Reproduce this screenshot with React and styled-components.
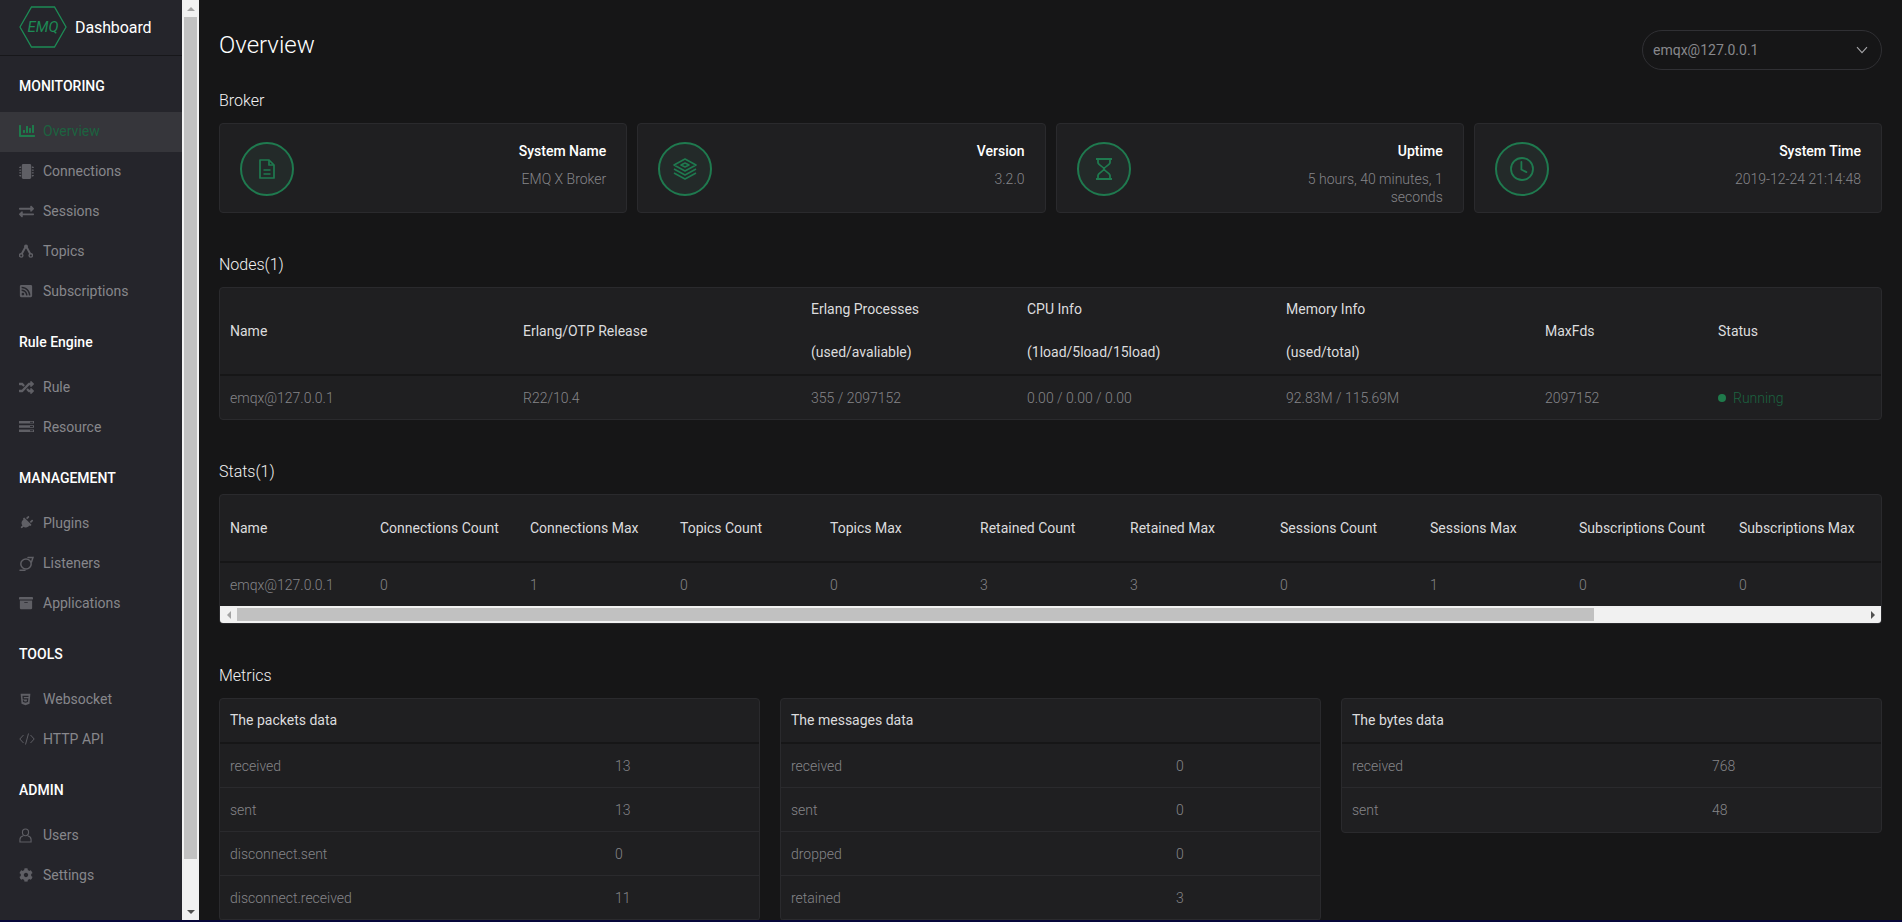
import React from "react";
import styled, { createGlobalStyle } from "styled-components";
import {
  FaChartBar, FaMicrochip, FaExchangeAlt, FaRssSquare, FaRandom, FaPlug, FaArchive, FaHtml5, FaCog,
} from "react-icons/fa";

const Global = createGlobalStyle`
  html, body { margin: 0; padding: 0; height: 100%; overflow: hidden; background: #07073a; }
  body { font-family: Roboto, "Liberation Sans", sans-serif; font-size: 14px; }
  * { box-sizing: border-box; }
`;

const Page = styled.div`
  display: flex;
  height: 920px;
  overflow: hidden;
  background: #161617;
`;

const Aside = styled.aside`
  width: 182px;
  flex: none;
  background: #25252b;
`;

const LogoBar = styled.div`
  display: flex;
  align-items: center;
  gap: 8px;
  height: 56px;
  padding-left: 19px;
  border-bottom: 1px solid #17171a;
`;

const LogoMark = styled.div`
  position: relative;
  width: 48px;
  height: 42px;
  margin-top: -1px;
`;

const LogoText = styled.span`
  position: absolute;
  inset: 0;
  display: flex;
  align-items: center;
  justify-content: center;
  color: #1d8a55;
  font-style: italic;
  font-size: 15px;
`;

const LogoTitle = styled.span`
  color: #fff;
  font-size: 16px;
  font-weight: 400;
  letter-spacing: -0.1px;
`;

const GroupTitle = styled.div`
  height: 56px;
  padding: 20px 0 0 19px;
  line-height: 20px;
  color: #fff;
  font-size: 14px;
  font-weight: 500;
`;

const NavItem = styled.div`
  display: flex;
  align-items: center;
  height: 40px;
  padding: 0 0 2px 19px;
  color: ${(p) => (p.$active ? "#1c6340" : "#87878b")};
  background: ${(p) => (p.$active ? "#36363b" : "transparent")};
  font-size: 14px;
  font-weight: 400;
`;

const NavIcon = styled.span`
  display: flex;
  align-items: center;
  width: 24px;
  height: 16px;
  flex: none;
  color: ${(p) => (p.$active ? "#1e7a4b" : "#5f5f65")};
`;

const PlugTilt = styled.span`
  display: flex;
  transform: rotate(45deg);
`;

const VBar = styled.div`
  display: flex;
  flex-direction: column;
  width: 17px;
  flex: none;
  background: #f1f1f1;
`;

const VArrow = styled.div`
  display: flex;
  align-items: center;
  justify-content: center;
  height: 17px;
  flex: none;
`;

const Tri = styled.i`
  width: 0;
  height: 0;
  display: block;
  border-style: solid;
  border-color: transparent;
  ${(p) => p.$dir === "up" && "border-width: 0 4px 4px; border-bottom-color: #a3a3a3;"}
  ${(p) => p.$dir === "down" && "border-width: 4px 4px 0; border-top-color: #505050;"}
  ${(p) => p.$dir === "left" && "border-width: 4px 4px 4px 0; border-right-color: #a3a3a3;"}
  ${(p) => p.$dir === "right" && "border-width: 4px 0 4px 4px; border-left-color: #505050;"}
`;

const VTrack = styled.div`
  flex: 1;
  padding: 0 2px;
`;

const VThumb = styled.div`
  height: 842px;
  background: #c1c1c1;
`;

const Main = styled.main`
  flex: 1;
  min-width: 0;
  padding: 30px 20px 0;
  overflow: hidden;
`;

const TopRow = styled.div`
  display: flex;
  justify-content: space-between;
  align-items: center;
  height: 40px;
  margin-bottom: 20px;
`;

const PageTitle = styled.h1`
  margin: -10px 0 0;
  color: #fff;
  font-size: 24px;
  font-weight: 300;
  line-height: 30px;
`;

const NodeSelect = styled.div`
  display: flex;
  align-items: center;
  justify-content: space-between;
  width: 240px;
  height: 40px;
  padding: 0 13px 0 10px;
  border: 1px solid #303034;
  border-radius: 20px;
  color: #88888c;
  font-size: 14px;
  font-weight: 400;
`;

const SectionTitle = styled.h2`
  margin: ${(p) => (p.$first ? "1px 0 11px" : "41px 0 11px")};
  height: 22px;
  line-height: 22px;
  color: #f2f2f2;
  font-size: 16px;
  font-weight: 300;
`;

const CardRow = styled.div`
  display: grid;
  grid-template-columns: repeat(4, 1fr);
  gap: 10px;
`;

const InfoCard = styled.div`
  display: flex;
  justify-content: space-between;
  height: 90px;
  padding: 18px 20px;
  background: #1f1f21;
  border: 1px solid #2a2a2d;
  border-radius: 4px;
`;

const IconCircle = styled.div`
  display: flex;
  align-items: center;
  justify-content: center;
  width: 54px;
  height: 54px;
  flex: none;
  border: 2px solid #1f7a4f;
  border-radius: 50%;
  background: #232a29;
  color: #1f7a4f;
`;

const InfoText = styled.div`
  text-align: right;
  margin-top: -1px;
`;

const InfoTitle = styled.div`
  color: #fff;
  font-size: 14px;
  font-weight: 500;
  line-height: 20px;
  margin-bottom: 9px;
`;

const InfoValue = styled.div`
  color: #858589;
  font-size: 14px;
  font-weight: 300;
  line-height: 18px;
  max-width: 160px;
  margin-left: auto;
`;

const Panel = styled.div`
  background: #1f1f21;
  border: 1px solid #2a2a2d;
  border-radius: 4px;
  overflow: hidden;
`;

const Table = styled.table`
  border-collapse: separate;
  border-spacing: 0;
  table-layout: fixed;
  width: ${(p) => p.$width}px;
`;

const Col = styled.col`
  width: ${(p) => p.$w}px;
`;

const HeadCell = styled.th`
  height: ${(p) => p.$h}px;
  padding: 0 0 0 10px;
  border-bottom: 2px solid #161617;
  color: #dcdcde;
  font-size: 14px;
  font-weight: 400;
  line-height: 43px;
  text-align: left;
  white-space: nowrap;
`;

const BodyCell = styled.td`
  height: 43px;
  padding: 0 0 0 10px;
  color: #858589;
  font-size: 14px;
  font-weight: 300;
  white-space: nowrap;
`;

const MetricCell = styled(BodyCell)`
  height: 44px;
  border-bottom: 1px solid ${(p) => (p.$last ? "transparent" : "#2a2a2d")};
`;

const Status = styled.span`
  display: inline-flex;
  align-items: center;
  gap: 7px;
  color: #1c6340;
`;

const Dot = styled.i`
  display: block;
  width: 8px;
  height: 8px;
  border-radius: 50%;
  background: #1f7a4b;
`;

const Scroller = styled.div`
  overflow: hidden;
`;

const HBar = styled.div`
  display: flex;
  height: 17px;
  background: #f1f1f1;
`;

const HArrow = styled.div`
  display: flex;
  align-items: center;
  justify-content: center;
  width: 17px;
  flex: none;
`;

const HTrack = styled.div`
  flex: 1;
  padding: 2px 0;
`;

const HThumb = styled.div`
  width: 83.4%;
  height: 13px;
  background: #c1c1c1;
`;

const MetricGrid = styled.div`
  display: grid;
  grid-template-columns: repeat(3, 1fr);
  gap: 20px;
  align-items: start;
`;

const TopicsIcon = () => (
  <svg width="14" height="14" viewBox="0 0 14 14" fill="none" stroke="currentColor">
    <circle cx="7" cy="2.6" r="2" fill="currentColor" stroke="none" />
    <circle cx="2.2" cy="11.4" r="1.7" strokeWidth="1.4" />
    <circle cx="11.8" cy="11.4" r="1.7" strokeWidth="1.4" />
    <path d="M6.2 3.6 2.8 9.8M7.8 3.6l3.4 6.2" strokeWidth="2" />
  </svg>
);
const ResourceIcon = () => (
  <svg width="15" height="14" viewBox="0 0 15 14" fill="currentColor">
    <path d="M0 1h15v2.6H0zM0 5.2h15v2.6H0zM0 9.4h15V12H0z" />
    <path d="M11 1.8h3v1h-3zM11 6h3v1h-3zM11 10.2h3v1h-3z" fill="#25252b" />
  </svg>
);
const ListenerIcon = () => (
  <svg width="15" height="15" viewBox="0 0 15 15" fill="none" stroke="currentColor" strokeWidth="1.5">
    <ellipse cx="7" cy="8" rx="5.2" ry="5" />
    <path d="M9 1.4h5L12.5 6M1 14.2h5" strokeLinecap="round" />
  </svg>
);
const CodeIcon = () => (
  <svg width="16" height="12" viewBox="0 0 16 12" fill="none" stroke="currentColor" strokeWidth="1">
    <path d="M4.5 2 .8 6l3.7 4M11.5 2l3.7 4-3.7 4M9.5.5l-3 11" />
  </svg>
);
const UserIcon = () => (
  <svg width="13" height="15" viewBox="0 0 14 16" fill="none" stroke="currentColor" strokeWidth="1.2">
    <path d="M7 1c2 0 3.3 1.4 3.3 3.4S9 8.2 7 8.2 3.7 6.4 3.7 4.4 5 1 7 1Z" />
    <path d="M4.6 8.2C2.4 8.8 1 10 1 12.2V15h12v-2.8c0-2.2-1.4-3.4-3.6-4" />
  </svg>
);
const FileIcon = () => (
  <svg width="20" height="22" viewBox="0 0 20 22" fill="none" stroke="currentColor" strokeWidth="1.7" strokeLinejoin="round">
    <path d="M3 2h9l5 5v13H3Z" />
    <path d="M12 2v5h5M6.5 12h7M6.5 16h7" />
  </svg>
);
const LayersIcon = () => (
  <svg width="26" height="24" viewBox="0 0 26 24" fill="none" stroke="currentColor" strokeWidth="1.6" strokeLinejoin="round">
    <path d="M13 2 24 8 13 14 2 8Z" />
    <path d="M13 6l4 2-4 2-4-2Z" />
    <path d="M2 12l11 6 11-6M2 16l11 6 11-6" />
  </svg>
);
const HourglassIcon = () => (
  <svg width="18" height="24" viewBox="0 0 18 24" fill="none" stroke="currentColor" strokeWidth="1.8" strokeLinejoin="round">
    <path d="M1 2h16M1 22h16" strokeWidth="2.2" />
    <path d="M3 2v3.5c0 2.5 6 4.5 6 6.5s-6 4-6 6.5V22M15 2v3.5c0 2.5-6 4.5-6 6.5s6 4 6 6.5V22" />
  </svg>
);
const ClockIcon = () => (
  <svg width="26" height="26" viewBox="0 0 26 26" fill="none" stroke="currentColor" strokeWidth="1.8" strokeLinecap="round">
    <circle cx="13" cy="13" r="11" />
    <path d="M12.4 6v7.5l5 2.6" />
  </svg>
);
const Chevron = () => (
  <svg width="12" height="8" viewBox="0 0 12 8" fill="none" stroke="#a6a6a9" strokeWidth="1.1">
    <path d="M1 1.2 6 6.6l5-5.4" />
  </svg>
);
const LogoHex = () => (
  <svg width="48" height="42" viewBox="0 0 48 42" fill="none" stroke="#1d8a55" strokeWidth="1.3">
    <path d="M1 21 12.5 1h23L47 21 35.5 41h-23Z" />
  </svg>
);

const nav = [
  { title: "MONITORING", items: [
    ["Overview", <FaChartBar size={16} />, true],
    ["Connections", <FaMicrochip size={15} />],
    ["Sessions", <FaExchangeAlt size={15} />],
    ["Topics", <TopicsIcon />],
    ["Subscriptions", <FaRssSquare size={14} />],
  ]},
  { title: "Rule Engine", items: [
    ["Rule", <FaRandom size={15} />],
    ["Resource", <ResourceIcon />],
  ]},
  { title: "MANAGEMENT", items: [
    ["Plugins", <PlugTilt><FaPlug size={14} /></PlugTilt>],
    ["Listeners", <ListenerIcon />],
    ["Applications", <FaArchive size={14} />],
  ]},
  { title: "TOOLS", items: [
    ["Websocket", <FaHtml5 size={13} />],
    ["HTTP API", <CodeIcon />],
  ]},
  { title: "ADMIN", items: [
    ["Users", <UserIcon />],
    ["Settings", <FaCog size={14} />],
  ]},
];

const cards = [
  ["System Name", "EMQ X Broker", <FileIcon />],
  ["Version", "3.2.0", <LayersIcon />],
  ["Uptime", "5 hours, 40 minutes, 1 seconds", <HourglassIcon />],
  ["System Time", "2019-12-24 21:14:48", <ClockIcon />],
];

const statsHead = ["Name", "Connections Count", "Connections Max", "Topics Count", "Topics Max", "Retained Count", "Retained Max", "Sessions Count", "Sessions Max", "Subscriptions Count", "Subscriptions Max"];
const statsRow = ["emqx@127.0.0.1", 0, 1, 0, 0, 3, 3, 0, 1, 0, 0];
const statsCols = [150, 150, 150, 150, 150, 150, 150, 150, 149, 160, 483];

const metrics = [
  { title: "The packets data", w: 385, open: true, rows: [["received", 13], ["sent", 13], ["disconnect.sent", 0], ["disconnect.received", 11]] },
  { title: "The messages data", w: 385, open: true, rows: [["received", 0], ["sent", 0], ["dropped", 0], ["retained", 3]] },
  { title: "The bytes data", w: 360, rows: [["received", 768], ["sent", 48]] },
];

export default function App() {
  return (
    <Page>
      <Global />
      <Aside>
        <LogoBar>
          <LogoMark><LogoHex /><LogoText>EMQ</LogoText></LogoMark>
          <LogoTitle>Dashboard</LogoTitle>
        </LogoBar>
        {nav.map((g) => (
          <div key={g.title}>
            <GroupTitle>{g.title}</GroupTitle>
            {g.items.map(([label, icon, active]) => (
              <NavItem key={label} $active={active}>
                <NavIcon $active={active}>{icon}</NavIcon>
                {label}
              </NavItem>
            ))}
          </div>
        ))}
      </Aside>
      <VBar>
        <VArrow><Tri $dir="up" /></VArrow>
        <VTrack><VThumb /></VTrack>
        <VArrow><Tri $dir="down" /></VArrow>
      </VBar>
      <Main>
        <TopRow>
          <PageTitle>Overview</PageTitle>
          <NodeSelect>emqx@127.0.0.1<Chevron /></NodeSelect>
        </TopRow>

        <SectionTitle $first>Broker</SectionTitle>
        <CardRow>
          {cards.map(([t, v, icon]) => (
            <InfoCard key={t}>
              <IconCircle>{icon}</IconCircle>
              <InfoText>
                <InfoTitle>{t}</InfoTitle>
                <InfoValue>{v}</InfoValue>
              </InfoText>
            </InfoCard>
          ))}
        </CardRow>

        <SectionTitle>Nodes(1)</SectionTitle>
        <Panel>
          <Table $width={1661}>
            <colgroup>
              <Col $w={293} /><Col $w={288} /><Col $w={216} /><Col $w={259} /><Col $w={259} /><Col $w={173} /><Col $w={173} />
            </colgroup>
            <thead>
              <tr>
                <HeadCell $h={88}>Name</HeadCell>
                <HeadCell $h={88}>Erlang/OTP Release</HeadCell>
                <HeadCell $h={88}>Erlang Processes<br />(used/avaliable)</HeadCell>
                <HeadCell $h={88}>CPU Info<br />(1load/5load/15load)</HeadCell>
                <HeadCell $h={88}>Memory Info<br />(used/total)</HeadCell>
                <HeadCell $h={88}>MaxFds</HeadCell>
                <HeadCell $h={88}>Status</HeadCell>
              </tr>
            </thead>
            <tbody>
              <tr>
                <BodyCell>emqx@127.0.0.1</BodyCell>
                <BodyCell>R22/10.4</BodyCell>
                <BodyCell>355 / 2097152</BodyCell>
                <BodyCell>0.00 / 0.00 / 0.00</BodyCell>
                <BodyCell>92.83M / 115.69M</BodyCell>
                <BodyCell>2097152</BodyCell>
                <BodyCell><Status><Dot />Running</Status></BodyCell>
              </tr>
            </tbody>
          </Table>
        </Panel>

        <SectionTitle>Stats(1)</SectionTitle>
        <Panel>
          <Scroller>
            <Table $width={1992}>
              <colgroup>{statsCols.map((w, i) => <Col key={i} $w={w} />)}</colgroup>
              <thead>
                <tr>{statsHead.map((h) => <HeadCell key={h} $h={68}>{h}</HeadCell>)}</tr>
              </thead>
              <tbody>
                <tr>{statsRow.map((c, i) => <BodyCell key={i}>{c}</BodyCell>)}</tr>
              </tbody>
            </Table>
          </Scroller>
          <HBar>
            <HArrow><Tri $dir="left" /></HArrow>
            <HTrack><HThumb /></HTrack>
            <HArrow><Tri $dir="right" /></HArrow>
          </HBar>
        </Panel>

        <SectionTitle>Metrics</SectionTitle>
        <MetricGrid>
          {metrics.map((m) => (
            <Panel key={m.title}>
              <Table $width={540}>
                <colgroup><Col $w={m.w} /><Col $w={540 - m.w} /></colgroup>
                <thead>
                  <tr><HeadCell colSpan={2} $h={45}>{m.title}</HeadCell></tr>
                </thead>
                <tbody>
                  {m.rows.map(([k, v], i) => {
                    const last = !m.open && i === m.rows.length - 1;
                    return (
                      <tr key={k}>
                        <MetricCell $last={last}>{k}</MetricCell>
                        <MetricCell $last={last}>{v}</MetricCell>
                      </tr>
                    );
                  })}
                </tbody>
              </Table>
            </Panel>
          ))}
        </MetricGrid>
      </Main>
    </Page>
  );
}
